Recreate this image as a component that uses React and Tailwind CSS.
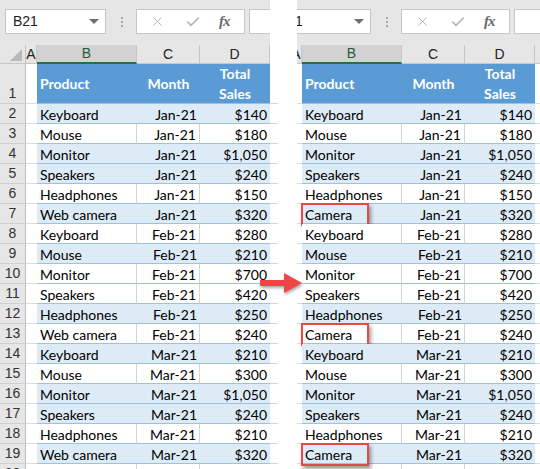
import React from "react";
import { X, Check } from "lucide-react";

const rows = [
  ["Keyboard", "Jan-21", "$140", 1],
  ["Mouse", "Jan-21", "$180", 0],
  ["Monitor", "Jan-21", "$1,050", 1],
  ["Speakers", "Jan-21", "$240", 1],
  ["Headphones", "Jan-21", "$150", 0],
  ["Web camera", "Jan-21", "$320", 1],
  ["Keyboard", "Feb-21", "$280", 0],
  ["Mouse", "Feb-21", "$210", 1],
  ["Monitor", "Feb-21", "$700", 0],
  ["Speakers", "Feb-21", "$420", 0],
  ["Headphones", "Feb-21", "$250", 1],
  ["Web camera", "Feb-21", "$240", 0],
  ["Keyboard", "Mar-21", "$210", 1],
  ["Mouse", "Mar-21", "$300", 0],
  ["Monitor", "Mar-21", "$1,050", 1],
  ["Speakers", "Mar-21", "$240", 1],
  ["Headphones", "Mar-21", "$210", 0],
  ["Web camera", "Mar-21", "$320", 1],
];

function Toolbar() {
  return (
    <div className="h-[45px] bg-[#e6e6e6] flex items-start pt-[9px]">
      <div className="ml-[5px] w-[101px] h-[25px] bg-white border border-[#c6c6c6] flex items-center justify-between pl-[7px] pr-[6px] shrink-0">
        <span className="text-[14px] text-[#222] font-['Liberation_Sans',sans-serif]">B21</span>
        <span className="w-0 h-0 border-l-[5px] border-r-[5px] border-t-[5px] border-l-transparent border-r-transparent border-t-[#6e6e6e]" />
      </div>
      <div className="ml-[15px] h-[25px] flex flex-col justify-center gap-[2px] shrink-0">
        <span className="w-[2px] h-[2px] bg-[#a6a6a6]" />
        <span className="w-[2px] h-[2px] bg-[#a6a6a6]" />
        <span className="w-[2px] h-[2px] bg-[#a6a6a6]" />
      </div>
      <div className="ml-[13px] w-[109px] h-[25px] bg-white border border-[#c6c6c6] flex items-center shrink-0">
        <X className="ml-[13px] text-[#b4b4b4]" size={15} strokeWidth={1.6} />
        <Check className="ml-[20px] text-[#b4b4b4]" size={16} strokeWidth={2.4} />
        <span className="ml-[18px] italic text-[15px] text-[#6a6a6a] font-['Liberation_Serif',serif] font-bold tracking-[-1px]">fx</span>
      </div>
      <div className="ml-[4px] flex-1 h-[25px] bg-white border border-[#c6c6c6]" />
    </div>
  );
}

function ColHeaders() {
  return (
    <div className="h-[19px] flex bg-[#e6e6e6] text-[14px] text-[#222] font-['Liberation_Sans',sans-serif]">
      <div className="w-[26px] shrink-0 border-r border-b border-[#c6c6c6] flex items-end justify-end pr-[3px] pb-[2px]">
        <span className="w-0 h-0 border-l-[12px] border-b-[12px] border-l-transparent border-b-[#b9b9b9]" />
      </div>
      <div className="w-[11px] shrink-0 border-r border-b border-[#c6c6c6] flex items-center justify-center overflow-hidden">A</div>
      <div className="w-[100px] shrink-0 bg-[#d2d2d2] border-r border-[#c6c6c6] border-b-2 border-b-[#217346] text-[#1e5c38] flex items-center justify-center">B</div>
      <div className="w-[63px] shrink-0 border-r border-b border-[#c6c6c6] flex items-center justify-center">C</div>
      <div className="w-[70px] shrink-0 border-r border-b border-[#c6c6c6] flex items-center justify-center">D</div>
      <div className="flex-1 border-b border-[#c6c6c6]" />
    </div>
  );
}

function RowNum({ n, tall }) {
  return (
    <div
      className={`w-[26px] shrink-0 bg-[#e6e6e6] border-r border-b border-r-[#bdbdbd] border-b-[#d0d0d0] flex items-end justify-center pb-[1px] text-[14px] leading-[17px] text-[#333] font-['Liberation_Sans',sans-serif] ${tall ? "h-[40px]" : "h-[20px]"}`}
    >
      {n}
    </div>
  );
}

function HeaderRow() {
  return (
    <div className="flex h-[40px]">
      <RowNum n={1} tall />
      <div className="w-[11px] shrink-0 border-b border-[#dcdcdc] bg-white" />
      <div className="w-[100px] shrink-0 bg-[#5b9bd5] border-b border-[#9bc2e6] text-white font-bold flex items-center pl-[3px]">
        Product
      </div>
      <div className="w-[63px] shrink-0 bg-[#5b9bd5] border-b border-[#9bc2e6] text-white font-bold flex items-center justify-center">
        Month
      </div>
      <div className="w-[70px] shrink-0 bg-[#5b9bd5] border-b border-[#9bc2e6] text-white font-bold flex flex-col items-center justify-center leading-[20px]">
        <span>Total</span>
        <span>Sales</span>
      </div>
      <div className="flex-1 border-b border-[#dcdcdc] bg-white" />
    </div>
  );
}

function DataRow({ n, r, replaced }) {
  const [product, month, sales, blue] = r;
  const isCam = replaced && product === "Web camera";
  const rowBg = blue ? "bg-[#ddebf7]" : "bg-white";
  const vline = blue ? "" : "border-r border-r-[#d4d4d4]";
  return (
    <div className="flex h-[20px]">
      <RowNum n={n} />
      <div className="w-[11px] shrink-0 border-b border-[#dcdcdc] bg-white" />
      <div className={`relative w-[100px] shrink-0 ${rowBg} ${vline} border-b border-b-[#9bc2e6] flex items-end pl-[3px] leading-[17px]`}>
        {isCam ? "Camera" : product}
        {isCam && (
          <div className="absolute -left-[1px] -top-[1px] w-[68px] h-[23px] border-2 border-[#ec4646] shadow-[2px_3px_4px_rgba(0,0,0,0.4)]" />
        )}
      </div>
      <div className={`w-[63px] shrink-0 ${rowBg} ${vline} border-b border-b-[#9bc2e6] flex items-end justify-end pr-[3px] leading-[17px]`}>
        {month}
      </div>
      <div className={`w-[70px] shrink-0 ${rowBg} border-b border-b-[#9bc2e6] flex items-end justify-end pr-[3px] leading-[17px]`}>
        {sales}
      </div>
      <div className="flex-1 border-b border-[#dcdcdc] bg-white" />
    </div>
  );
}

function EmptyRow({ n }) {
  return (
    <div className="flex h-[20px]">
      <RowNum n={n} />
      <div className="w-[11px] shrink-0 border-b border-[#dcdcdc] bg-white" />
      <div className="w-[100px] shrink-0 bg-white border-r border-[#d4d4d4]" />
      <div className="w-[63px] shrink-0 bg-white border-r border-[#d4d4d4]" />
      <div className="w-[70px] shrink-0 bg-white" />
      <div className="flex-1 bg-white" />
    </div>
  );
}

function Sheet({ replaced }) {
  return (
    <div className="w-[285px] font-[Lato,sans-serif] text-[14px] text-black">
      <Toolbar />
      <ColHeaders />
      <HeaderRow />
      {rows.map((r, i) => (
        <DataRow key={i} n={i + 2} r={r} replaced={replaced} />
      ))}
      <EmptyRow n={20} />
    </div>
  );
}

export default function App() {
  return (
    <div className="relative w-[540px] h-[469px] overflow-hidden bg-white flex">
      <div className="w-[270px] shrink-0 overflow-hidden">
        <Sheet />
      </div>
      <div className="w-[27px] shrink-0 bg-white flex flex-col">
        <div className="h-[104px] w-[8px] border-b border-[#d4d4d4]" />
        {Array.from({ length: 18 }).map((_, i) => (
          <div key={i} className="h-[20px] w-[8px] border-b border-[#d4d4d4]" />
        ))}
      </div>
      <div className="w-[243px] shrink-0 overflow-hidden">
        <div className="-ml-[32px]">
          <Sheet replaced />
        </div>
      </div>
      <svg
        className="absolute left-[258px] top-[270px] drop-shadow-[1px_2px_1.5px_rgba(0,0,0,0.35)]"
        width="48"
        height="28"
        viewBox="0 0 48 28"
      >
        <path d="M2 10 H26 V3 L44 13 L26 23 V16 H2 Z" fill="#ee4646" />
      </svg>
    </div>
  );
}
